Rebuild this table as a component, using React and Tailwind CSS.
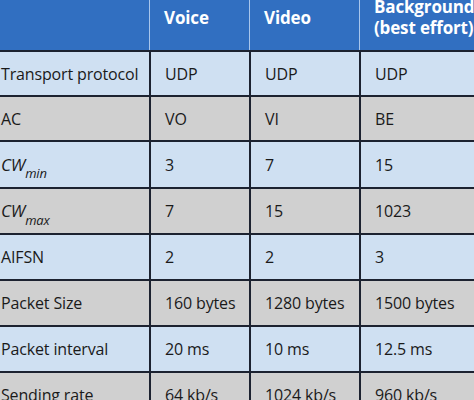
import React from "react";

const rows = [
  { h: 45, bg: "bg-[#cfe0f2]", label: "Transport protocol", v: ["UDP", "UDP", "UDP"] },
  { h: 45, bg: "bg-[#d0d0d0]", label: "AC", v: ["VO", "VI", "BE"] },
  { h: 47, bg: "bg-[#cfe0f2]", label: "cwmin", v: ["3", "7", "15"] },
  { h: 46, bg: "bg-[#d0d0d0]", label: "cwmax", v: ["7", "15", "1023"] },
  { h: 46, bg: "bg-[#cfe0f2]", label: "AIFSN", v: ["2", "2", "3"] },
  { h: 46, bg: "bg-[#d0d0d0]", label: "Packet Size", v: ["160 bytes", "1280 bytes", "1500 bytes"] },
  { h: 46, bg: "bg-[#cfe0f2]", label: "Packet interval", v: ["20 ms", "10 ms", "12.5 ms"] },
  { h: 46, bg: "bg-[#d0d0d0]", label: "Sending rate", v: ["64 kb/s", "1024 kb/s", "960 kb/s"] },
];

function Label({ label }) {
  if (label === "cwmin" || label === "cwmax") {
    return (
      <span className="italic text-[17px]">
        CW<sub className="text-[13px] italic align-[-4px]">{label === "cwmin" ? "min" : "max"}</sub>
      </span>
    );
  }
  return <span>{label}</span>;
}

export default function App() {
  return (
    <div
      className="w-[474px] h-[400px] overflow-hidden bg-white text-[#1a1a1a] text-[16px] tracking-[-0.15px]"
      style={{ fontFamily: '"Open Sans", "Noto Sans", sans-serif' }}
    >
      <div className="flex h-[50px] bg-[#316fc1] text-white font-bold text-[17px] leading-[21px] overflow-hidden">
        <div className="w-[149px] shrink-0" />
        <div className="w-[100px] shrink-0 border-l border-[#a9c6ec] pl-[14px] pt-[7px]">Voice</div>
        <div className="w-[110px] shrink-0 border-l border-[#a9c6ec] pl-[14px] pt-[7px]">Video</div>
        <div className="w-[115px] shrink-0 border-l border-[#a9c6ec] pl-[14px] flex flex-col whitespace-nowrap">
          <span className="-mt-[4px]">Background</span>
          <span>(best effort)</span>
        </div>
      </div>
      {rows.map((r, i) => (
        <div
          key={i}
          className={`flex border-t-2 border-[#1c2230] ${r.bg}`}
          style={{ height: r.h }}
        >
          <div className="w-[149px] shrink-0 pl-[1px] flex items-center whitespace-nowrap">
            <Label label={r.label} />
          </div>
          <div className="w-[100px] shrink-0 border-l-2 border-[#1c2230] pl-[14px] flex items-center whitespace-nowrap">
            {r.v[0]}
          </div>
          <div className="w-[110px] shrink-0 border-l-2 border-[#1c2230] pl-[14px] flex items-center whitespace-nowrap">
            {r.v[1]}
          </div>
          <div className="w-[115px] shrink-0 border-l-2 border-[#1c2230] pl-[14px] flex items-center whitespace-nowrap">
            {r.v[2]}
          </div>
        </div>
      ))}
    </div>
  );
}
